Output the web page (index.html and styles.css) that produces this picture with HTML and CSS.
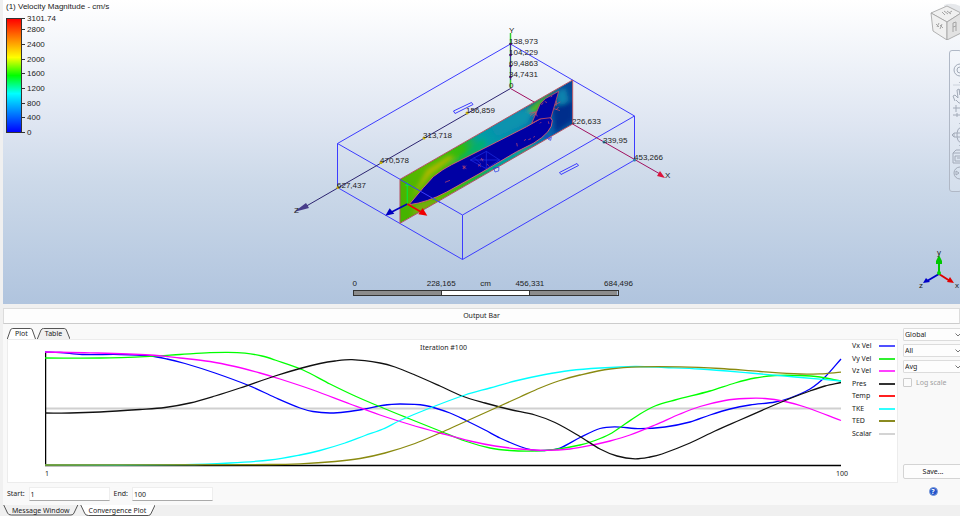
FILE: index.html
```
<!DOCTYPE html>
<html lang="en">
<head>
  <meta charset="UTF-8" />
  <meta name="viewport" content="width=device-width, initial-scale=1.0"/>
  <title>Velocity Magnitude</title>
  <link rel="stylesheet" href="styles.css">
</head>
<body>
  <main class="view">
    <svg class="scene" viewBox="3 0 957 304" preserveAspectRatio="xMidYMin meet">
      <defs>
        <linearGradient id="flow" x1="60" y1="400" x2="578" y2="100" gradientUnits="userSpaceOnUse">
          <stop offset="0" stop-color="#46b400"/>
          <stop offset="0.2" stop-color="#5ab800"/>
          <stop offset="0.41" stop-color="#2fbb10"/>
          <stop offset="0.51" stop-color="#00a0a5"/>
          <stop offset="0.7" stop-color="#0686b0"/>
          <stop offset="0.84" stop-color="#0560a8"/>
          <stop offset="1" stop-color="#064a98"/>
        </linearGradient>
        <clipPath id="plane"><path d="M60 328L578 30V162L60 460Z"/></clipPath>
        <filter id="soft" x="-30%" y="-30%" width="160%" height="160%"><feGaussianBlur stdDeviation="6"/></filter>
      </defs>

      <!-- domain box -->
      <g class="box">
        <path d="M337.500 143.500L510.500 44L634.500 116L462.500 215Z"/>
        <path d="M337.500 143.500V187.500L462.500 259.500L634.500 160V116M462.500 215V259.500"/>
        <path d="M453.500 111L471.500 102.500L473 104.500L455 113.500ZM559.500 172.500L577 163.500L578.500 165.500L561 174.500Z"/>
      </g>

      <!-- axes -->
      <path d="M510.500 88.500L303 208" stroke="#2c2470" stroke-width="1"/>
      <path d="M294 212L306 203L309 208Z" fill="#483d8b"/>
      <path d="M510.500 88.500L660 174" stroke="#a01060" stroke-width="1"/>
      <path d="M665 178L657 176L660 171Z" fill="#dc143c"/>
      <path d="M510.500 33V88" stroke="#32cd32" stroke-width="1.500"/>
      <path d="M510.500 44V80" stroke="#3a3a9a" stroke-width="1"/>
      <g fill="#4b0082">
        <circle cx="510.500" cy="44" r="1.300"/><circle cx="510.500" cy="55" r="1.300"/>
        <circle cx="510.500" cy="66" r="1.300"/><circle cx="510.500" cy="77" r="1.300"/>
      </g>
      <g fill="#c8b400">
        <circle cx="467" cy="113" r="1.500"/><circle cx="424" cy="138" r="1.500"/>
        <circle cx="381" cy="162.500" r="1.500"/><circle cx="338" cy="187.500" r="1.500"/>
      </g>
      <g fill="#2a80b0"><circle cx="604" cy="142" r="1.500"/><circle cx="634.500" cy="160" r="1.500"/></g>

      <!-- result plane with the hull -->
      <g transform="translate(380 70) scale(.33333)">
        <g clip-path="url(#plane)">
          <path d="M60 328L578 30V162L60 460Z" fill="url(#flow)"/>
          <g filter="url(#soft)">
            <path d="M95 385L150 315L225 260L205 258L140 300Z" fill="#b0b800"/>
            <path d="M200 295L250 255L310 205L320 225L230 280Z" fill="#00b070"/>
            <path d="M330 165L420 120L470 110L440 160L350 200Z" fill="#0a93ae"/>
            <path d="M440 120L500 70L540 52L500 82L470 130Z" fill="#50b820"/>
            <path d="M528 70L556 52L566 90L540 120Z" fill="#0b82ad"/>
            <path d="M520 110L578 95V150L525 190Z" fill="#032f8c"/>
            <path d="M110 405L190 385L240 350L170 400L90 442Z" fill="#80a810"/>
            <path d="M190 385L290 320L420 245L470 220L400 270L230 360Z" fill="#00a890"/>
            <path d="M400 258L450 232L480 210L440 245Z" fill="#50c030"/>
          </g>
        </g>
        <path d="M60 328L578 30V162L60 460Z" fill="none" stroke="#b45060" stroke-width="3"/>
        <path d="M88 403L130 353L160 320Q190 296 215 284L350 216L440 170L480 147Q512 132 517 152Q518 185 460 220L410 245L300 310L200 366Q140 398 88 404Z" fill="#0000a4" stroke="#d06070" stroke-width="3"/>
        <path d="M455 160L480 103L496 86L536 64L513 143L480 147Z" fill="#0004a4" stroke="#c85060" stroke-width="2.500"/>
        <path class="speck" d="M195 337L210 331M247 288L259 296M258 287L248 297M252 286V298M304 264L309 274M300 270L311 268M294 282L302 290M303 281L294 289M320 282L326 287M410 219L412 229M432 212L438 208M445 209L453 206M460 202L465 199M448 130L465 126L472 139M450 137L472 122M458 140L470 128M480 160L484 156M505 154L507 162M484 105L490 98M524 105L541 96M530 92L528 108M522 116L540 122M536 111L528 120M494 94L501 98M512 81L517 78"/>
        <path class="sketch" d="M271 270L319 244L359 270L319 296ZM319 244V296M271 270H359M281 262L302 281M341 294L357 292L356 303L345 306ZM496 196L507 200M505 208L514 201L512 211ZM494 202L508 205"/>
        <path d="M82 402V342" stroke="#10e030" stroke-width="4"/>
        <path d="M75 348L82 335L89 348Z" fill="#10e030"/>
        <path d="M82 402L35 426" stroke="#0000c0" stroke-width="5"/>
        <path d="M16 437L29 415L43 431Z" fill="#0000c0"/>
        <path d="M82 402L122 425" stroke="#f00000" stroke-width="5"/>
        <path d="M142 437L115 433L128 414Z" fill="#f00000"/>
      </g>

      <!-- box edge in front of the plane -->
      <path class="box" d="M400 179.500L440 202.500"/>

      <g class="scene-label">
        <text x="509" y="33">Y</text>
        <text x="509" y="44">138,973</text>
        <text x="509" y="55">104,229</text>
        <text x="509" y="66">69,4863</text>
        <text x="509" y="77">34,7431</text>
        <text x="509" y="88">0</text>
        <text x="466" y="113">156,859</text>
        <text x="423" y="138">313,718</text>
        <text x="380" y="163">470,578</text>
        <text x="337" y="188">627,437</text>
        <text x="294" y="213">Z</text>
        <text x="572" y="124">226,633</text>
        <text x="603" y="143">339,95</text>
        <text x="634" y="160">453,266</text>
        <text x="665" y="178">X</text>
      </g>
    </svg>

    <section class="scale">
      <h1>(1) Velocity Magnitude - cm/s</h1>
      <div class="scale-body">
        <div class="scale-bar"></div>
        <ul class="scale-values">
          <li class="first">3101.74</li>
          <li>2800</li>
          <li>2400</li>
          <li>2000</li>
          <li>1600</li>
          <li>1200</li>
          <li>800</li>
          <li>400</li>
          <li class="last">0</li>
        </ul>
      </div>
    </section>

    <div class="ruler">
      <div class="ruler-values"><span>0</span><span>228,165</span><span>cm</span><span>456,331</span><span>684,496</span></div>
      <div class="ruler-bar"><i></i><i></i><i></i></div>
    </div>

    <svg class="cube" viewBox="0 0 30 40">
      <path d="M14 5Q22 2 30 6V34L20 38Z" fill="#c4c8d0" opacity=".4"/>
      <g fill="#f0f0f0" stroke="#a0a0a0" stroke-width=".8">
        <path d="M1 13L17 6L31 13L17 22Z"/>
        <path d="M1 13L17 22V40L3 31Z"/>
        <path d="M17 22L31 13V33L17 40Z" fill="#e2e2e2"/>
      </g>
      <path d="M12 12L15 15M14 11L18 14M17 11L21 14M19 13L22 11M6 24L9 27M7 27L9 23M10 25L13 28M12 24L10 29M23 23V32M26 22V31M23 27L26 26M23 23L26 22" fill="none" stroke="#a4a4a4" stroke-width="1"/>
    </svg>

    <div class="navbar">
      <svg viewBox="0 0 12 140" fill="none" stroke="#a2aab8">
        <circle cx="10" cy="19" r="6"/><circle cx="10" cy="19" r="3"/>
        <path d="M3 34H12" stroke="#ccd2dc"/>
        <path d="M5 50L3 45L5 44L8 47L7 39L9 38L10 44V38H12M6 49L9 52H12"/>
        <path d="M6 54V61M3 57H10M3 64H12M7 62V66"/>
        <ellipse cx="10" cy="84" rx="3" ry="7"/><path d="M12 82H4V86H12M4 82L2 84L4 86"/>
        <path d="M3 102H12M3 102V112H12M5 105H12M5 105V110H12M3 102L6 99H12M7 107H12"/>
        <circle cx="10" cy="122" r="6"/><path d="M6 120L9 122L6 124ZM11 117V120M11 124V127"/>
        <path d="M9 32L11 30V32ZM9 73L11 71V73ZM9 95L11 93V95Z" fill="#8a92a2" stroke="none"/>
      </svg>
    </div>

    <svg class="triad" viewBox="0 0 42 40">
      <path d="M21 24V10" stroke="#00c800" stroke-width="2"/><path d="M18 11L21 5L24 11V14H18Z" fill="#00c800"/>
      <path d="M21 24L9 31" stroke="#0000c8" stroke-width="2"/><path d="M5 33L8 28L12 32Z" fill="#0000c8"/>
      <path d="M21 24L32 31" stroke="#e00000" stroke-width="2"/><path d="M36 33L29 32L32 27Z" fill="#e00000"/>
      <circle cx="21" cy="23" r="2" fill="#00d800"/>
      <text x="19" y="5">y</text><text x="1" y="38">z</text><text x="37" y="38">x</text>
    </svg>
  </main>

  <h2 class="output-title">Output Bar</h2>

  <section class="panel">
    <div class="panel-main">
      <nav class="tabs">
        <button type="button" class="tab active">
          <svg viewBox="0 0 100 11" preserveAspectRatio="none"><path d="M1 11L12 2Q14 .5 20 .5H82Q86 .5 88 2L99 11"/></svg>
          <span>Plot</span>
        </button>
        <button type="button" class="tab">
          <svg viewBox="0 0 100 11" preserveAspectRatio="none"><path d="M1 11L12 2Q14 .5 20 .5H82Q86 .5 88 2L99 11"/></svg>
          <span>Table</span>
        </button>
      </nav>

      <div class="plot">
        <figure class="chart">
          <figcaption>Iteration #100</figcaption>
          <svg id="chart" viewBox="45 350 797 117" preserveAspectRatio="none">
            <path d="M45 408.500H841" stroke="#d0d0d0" stroke-width="2"/>
            <path d="M45.500 352V465.500H841" stroke="#000" stroke-width="1.500"/>
          </svg>
          <div class="chart-axis"><span>1</span><span>100</span></div>
        </figure>
        <ul class="legend">
          <li class="vx">Vx Vel</li>
          <li class="vy">Vy Vel</li>
          <li class="vz">Vz Vel</li>
          <li class="pres">Pres</li>
          <li class="temp">Temp</li>
          <li class="tke">TKE</li>
          <li class="ted">TED</li>
          <li class="scalar">Scalar</li>
        </ul>
      </div>

      <form class="range">
        <label for="start">Start:</label>
        <input type="text" id="start" value="1" />
        <label for="end">End:</label>
        <input type="text" id="end" value="100" />
      </form>
    </div>

    <aside class="controls">
      <div class="select">
        <select aria-label="Region"><option>Global</option></select>
        <svg viewBox="0 0 6 4"><path d="M.5 .5L3 3L5.500 .5"/></svg>
      </div>
      <div class="select">
        <select aria-label="Quantity"><option>All</option></select>
        <svg viewBox="0 0 6 4"><path d="M.5 .5L3 3L5.500 .5"/></svg>
      </div>
      <div class="select">
        <select aria-label="Statistic"><option>Avg</option></select>
        <svg viewBox="0 0 6 4"><path d="M.5 .5L3 3L5.500 .5"/></svg>
      </div>
      <label class="check"><input type="checkbox" disabled /> Log scale</label>
      <button type="button" class="save">Save...</button>
      <button type="button" class="help" aria-label="Help">?</button>
    </aside>
  </section>

  <nav class="tabs dock">
    <button type="button" class="tab">
      <svg viewBox="0 0 100 11" preserveAspectRatio="none"><path d="M1 0L6 8Q7 10 11 10H90Q93 10 94 8L99 0"/></svg>
      <span>Message Window</span>
    </button>
    <button type="button" class="tab active">
      <svg viewBox="0 0 100 11" preserveAspectRatio="none"><path d="M1 0L6 8Q7 10.500 11 10.500H90Q93 10.500 94 8L99 0"/></svg>
      <span>Convergence Plot</span>
    </button>
  </nav>

  <script src="chart.js"></script>
</body>
</html>
```

FILE: chart.js
```
const series = [
  { color: '#0000ff', points: [[45,352],[60,352.5],[82,354.5],[120,354.5],[150,356],[167,359],[185,363.5],[215,373],[250,386],[275,397.5],[300,408],[313,411.5],[330,413],[345,412],[365,409],[382,405.5],[400,404],[425,405.5],[450,413],[467,421],[485,430],[500,438],[520,446.5],[532,450],[545,450.5],[560,448],[580,437.5],[600,428.5],[615,426.8],[640,428.7],[665,427],[690,422],[710,415],[730,409],[750,405],[775,402],[790,398],[810,389],[825,377],[841,359]] },
  { color: '#00ff00', points: [[45,358],[100,358],[150,356.3],[180,354.5],[210,352.7],[228,352.3],[245,353.2],[262,356],[275,360],[303,370],[330,384],[355,396],[383,408],[410,419],[440,431],[465,441],[490,448],[510,450.5],[533,451],[555,449.5],[580,445],[595,440.5],[610,434],[625,424],[640,414],[655,406],[675,400],[710,391],[735,383],[755,378],[775,375.5],[800,375.5],[820,377],[841,381]] },
  { color: '#ff00ff', points: [[45,352],[90,352.8],[150,355],[180,358],[210,361.5],[235,366.5],[260,373],[280,379],[313,390],[350,404],[380,415],[410,424.5],[440,433],[470,441],[495,446],[520,449],[545,450.3],[570,449],[595,444.5],[610,441],[630,435],[655,425],[680,414],[700,406.5],[725,400.5],[745,398.5],[765,398.5],[785,401.5],[805,407],[841,420.5]] },
  { color: '#111111', points: [[45,413],[70,413],[100,412],[140,409.5],[165,407.5],[190,403],[215,396],[240,388],[275,376],[300,368.5],[320,363.5],[335,361],[352,359.7],[380,363],[395,367],[415,375],[440,386],[462,396],[485,403],[510,409.5],[535,415],[555,422.5],[580,436.5],[600,449],[617,456],[635,458.8],[650,457],[662,454],[690,443],[715,431],[740,420],[765,409],[790,398.5],[810,391],[825,386],[841,382.5]] },
  { color: '#00ffff', points: [[45,465],[185,464.7],[230,463],[270,460],[300,455],[320,450.5],[345,443],[365,435.5],[383,429],[400,420.5],[430,408],[465,395],[490,388],[515,381],[545,374.5],[570,370.5],[600,368],[635,366.5],[665,367.5],[700,369],[750,373],[795,377],[841,381]] },
  { color: '#8a8a10', points: [[45,465],[270,464.5],[300,463.8],[335,461.5],[360,458.5],[385,453],[415,443.5],[440,433],[460,424],[480,415],[500,406],[520,397],[540,388],[560,380.5],[580,375],[610,369],[640,366.8],[680,366.8],[720,368.5],[760,371.5],[800,374],[820,373.8],[841,372.2]] }
];

// smooth curve through all points; control points sit a third of the way along x
function curve(p) {
  const slope = (i) => {
    const a = p[Math.max(i - 1, 0)];
    const b = p[Math.min(i + 1, p.length - 1)];
    return (b[1] - a[1]) / (b[0] - a[0]);
  };
  let d = `M${p[0]}`;
  for (let i = 1; i < p.length; i++) {
    const [x0, y0] = p[i - 1];
    const [x1, y1] = p[i];
    const h = (x1 - x0) / 3;
    d += `C${x0 + h},${y0 + h * slope(i - 1)} ${x1 - h},${y1 - h * slope(i)} ${x1},${y1}`;
  }
  return d;
}

const chart = document.getElementById('chart');

series.forEach((s) => {
  const path = document.createElementNS('http://www.w3.org/2000/svg', 'path');
  path.setAttribute('class', 'line');
  path.setAttribute('stroke', s.color);
  path.setAttribute('d', curve(s.points));
  chart.appendChild(path);
});
```

FILE: styles.css
```
* {
  box-sizing: border-box;
}

body {
  margin: 0;
  padding-left: 3px;
  height: 100vh;
  display: flex;
  flex-direction: column;
  overflow: hidden;
  background: #f0f0f0;
  color: #222;
  font-family: "Noto Sans", "Open Sans", sans-serif;
  font-size: 7px;
  line-height: 10px;
}

h1, h2, ul, figure {
  margin: 0;
  padding: 0;
  font-size: inherit;
  font-weight: normal;
  list-style: none;
}

button, input, select {
  font: inherit;
  color: inherit;
  margin: 0;
}

/* 3D view */
.view {
  position: relative;
  flex: 1;
  min-height: 0;
  overflow: hidden;
  background: linear-gradient(#fff, #dfe6f2 40%, #ccd9e9 60%, #b0c4de);
  font-family: "Liberation Sans", Arial, sans-serif;
  font-size: 8px;
}

.scene {
  display: block;
  width: 100%;
  height: 100%;
  fill: none;
}

.box {
  stroke: #3c3cff;
  stroke-width: 1;
}

.speck {
  stroke: #d05068;
  stroke-width: 2;
}

.sketch {
  stroke: #2030e8;
  stroke-width: 2;
}

.scene-label {
  fill: #222;
}

.scale {
  position: absolute;
  top: 2px;
  left: 3px;
}

.scale-body {
  display: flex;
  height: 115px;
  margin-top: 6px;
}

.scale-bar {
  width: 16px;
  border: 1px solid #333;
  background: linear-gradient(#f00, #ff8000 17%, #ff0 34%, #0f0 50%, #0ff 66%, #0080ff 83%, #00f);
}

.scale-values {
  display: flex;
  flex-direction: column;
  line-height: 0;
}

.scale-values li {
  flex: 400 1 0;
}

.scale-values .first {
  flex-grow: 302;
}

.scale-values .last {
  flex-grow: 0;
}

.scale-values li::before {
  content: "";
  display: inline-block;
  width: 3px;
  height: 1px;
  margin-right: 2px;
  background: #333;
  vertical-align: middle;
}

.ruler {
  position: absolute;
  bottom: 8px;
  left: 50%;
  width: 266px;
  margin-left: -129px;
}

.ruler-values {
  display: grid;
  grid-template-columns: 2fr 1fr 1fr 2fr 0;
  line-height: 12px;
}

.ruler-values span {
  display: flex;
  justify-content: center;
  width: 0;
}

.ruler-values span:first-child {
  justify-content: flex-start;
}

.ruler-bar {
  display: flex;
  height: 6px;
  border: 1px solid #333;
}

.ruler-bar i {
  flex: 1;
  background: #8c8c8c;
}

.ruler-bar i:nth-child(2) {
  background: #fff;
  border: solid #333;
  border-width: 0 1px;
}

.cube {
  position: absolute;
  top: 0;
  right: 0;
  width: 30px;
  height: 40px;
}

.navbar {
  position: absolute;
  top: 50px;
  right: -2px;
  width: 13px;
  height: 142px;
  border: 1px solid #b0b8c6;
  border-radius: 3px;
  background: rgba(255, 255, 255, 0.2);
}

.navbar svg {
  display: block;
  width: 12px;
  height: 140px;
}

.triad {
  position: absolute;
  right: 0;
  bottom: 14px;
  width: 42px;
  height: 40px;
  overflow: visible;
  fill: #222;
}

/* output bar */
.output-title {
  height: 16px;
  margin-top: 4px;
  border: 1px solid #dcdcdc;
  border-bottom-color: #ccc;
  background: #fdfdfd;
  line-height: 14px;
  text-align: center;
}

.panel {
  display: flex;
  gap: 5px;
  padding: 4px 0 4px 4px;
  background: #f9f9f9;
}

.panel-main {
  flex: 1;
  min-width: 0;
}

.tabs {
  display: flex;
  gap: 1px;
}

.tab {
  position: relative;
  height: 11px;
  padding: 0 8px;
  border: 0;
  background: none;
  line-height: 11px;
}

.tab svg {
  position: absolute;
  inset: 0;
  width: 100%;
  height: 100%;
  fill: #f0f0f0;
  stroke: #555;
}

.tab.active svg {
  fill: #fff;
}

.tab path,
.line {
  vector-effect: non-scaling-stroke;
}

.tab span {
  position: relative;
}

.plot {
  display: flex;
  gap: 10px;
  height: 144px;
  padding: 3px 2px 0 37px;
  border: 1px solid #ececec;
  background: #fff;
}

.chart {
  flex: 1;
  min-width: 0;
}

.chart figcaption {
  height: 7px;
  line-height: 10px;
  text-align: center;
}

.chart svg {
  display: block;
  width: 100%;
  height: 117px;
  fill: none;
}

.line {
  stroke-width: 1.3;
}

.chart-axis {
  display: flex;
  justify-content: space-between;
  margin-right: -6px;
  line-height: 14px;
}

.legend {
  display: grid;
  width: 43px;
  height: 100px;
  margin-top: -3px;
}

.legend li {
  display: flex;
  align-items: center;
  justify-content: space-between;
}

.legend li::after {
  content: "";
  width: 16px;
  border-top: 2px solid;
}

.vx::after { color: #5050ff; }
.vy::after { color: #30f030; }
.vz::after { color: #ff40ff; }
.pres::after { color: #333; }
.temp::after { color: #ff2020; }
.tke::after { color: #30ffff; }
.ted::after { color: #8a8a20; }
.scalar::after { color: #d4d4d4; }

.range {
  display: flex;
  align-items: center;
  gap: 4px;
  margin-top: 4px;
}

.range input {
  width: 81px;
  height: 14px;
  padding: 0 1px;
  border: 1px solid #eee;
  border-bottom-color: #aaa;
  background: #fff;
}

/* right column, runs past the window edge */
.controls {
  display: flex;
  flex-direction: column;
  gap: 3px;
  width: 60px;
  margin-right: -3px;
}

.select {
  position: relative;
}

.select select {
  display: block;
  width: 100%;
  height: 13px;
  padding: 0 1px;
  border: 1px solid #dcdcdc;
  border-radius: 1px;
  background: #fdfdfd;
  appearance: none;
}

.select svg {
  position: absolute;
  top: 5px;
  right: 2px;
  width: 6px;
  height: 4px;
  fill: none;
  stroke: #777;
}

.check {
  display: flex;
  align-items: center;
  gap: 4px;
  height: 13px;
  color: #a0a0a0;
}

.check input {
  width: 9px;
  height: 9px;
  border: 1px solid #ccc;
  border-radius: 1px;
  background: #fbfbfb;
  appearance: none;
}

.save {
  height: 15px;
  margin-top: auto;
  padding: 0;
  border: 1px solid #d4d4d4;
  border-radius: 2px;
  background: #fdfdfd;
}

.help {
  align-self: center;
  width: 9px;
  height: 9px;
  margin: 5px 0;
  padding: 0;
  border: 1px solid #7a9ad8;
  border-radius: 50%;
  background: #2456cc;
  color: #fff;
  font-weight: bold;
  line-height: 7px;
}

.dock {
  height: 11px;
}

.dock .tab {
  padding: 0 9px;
}
```
